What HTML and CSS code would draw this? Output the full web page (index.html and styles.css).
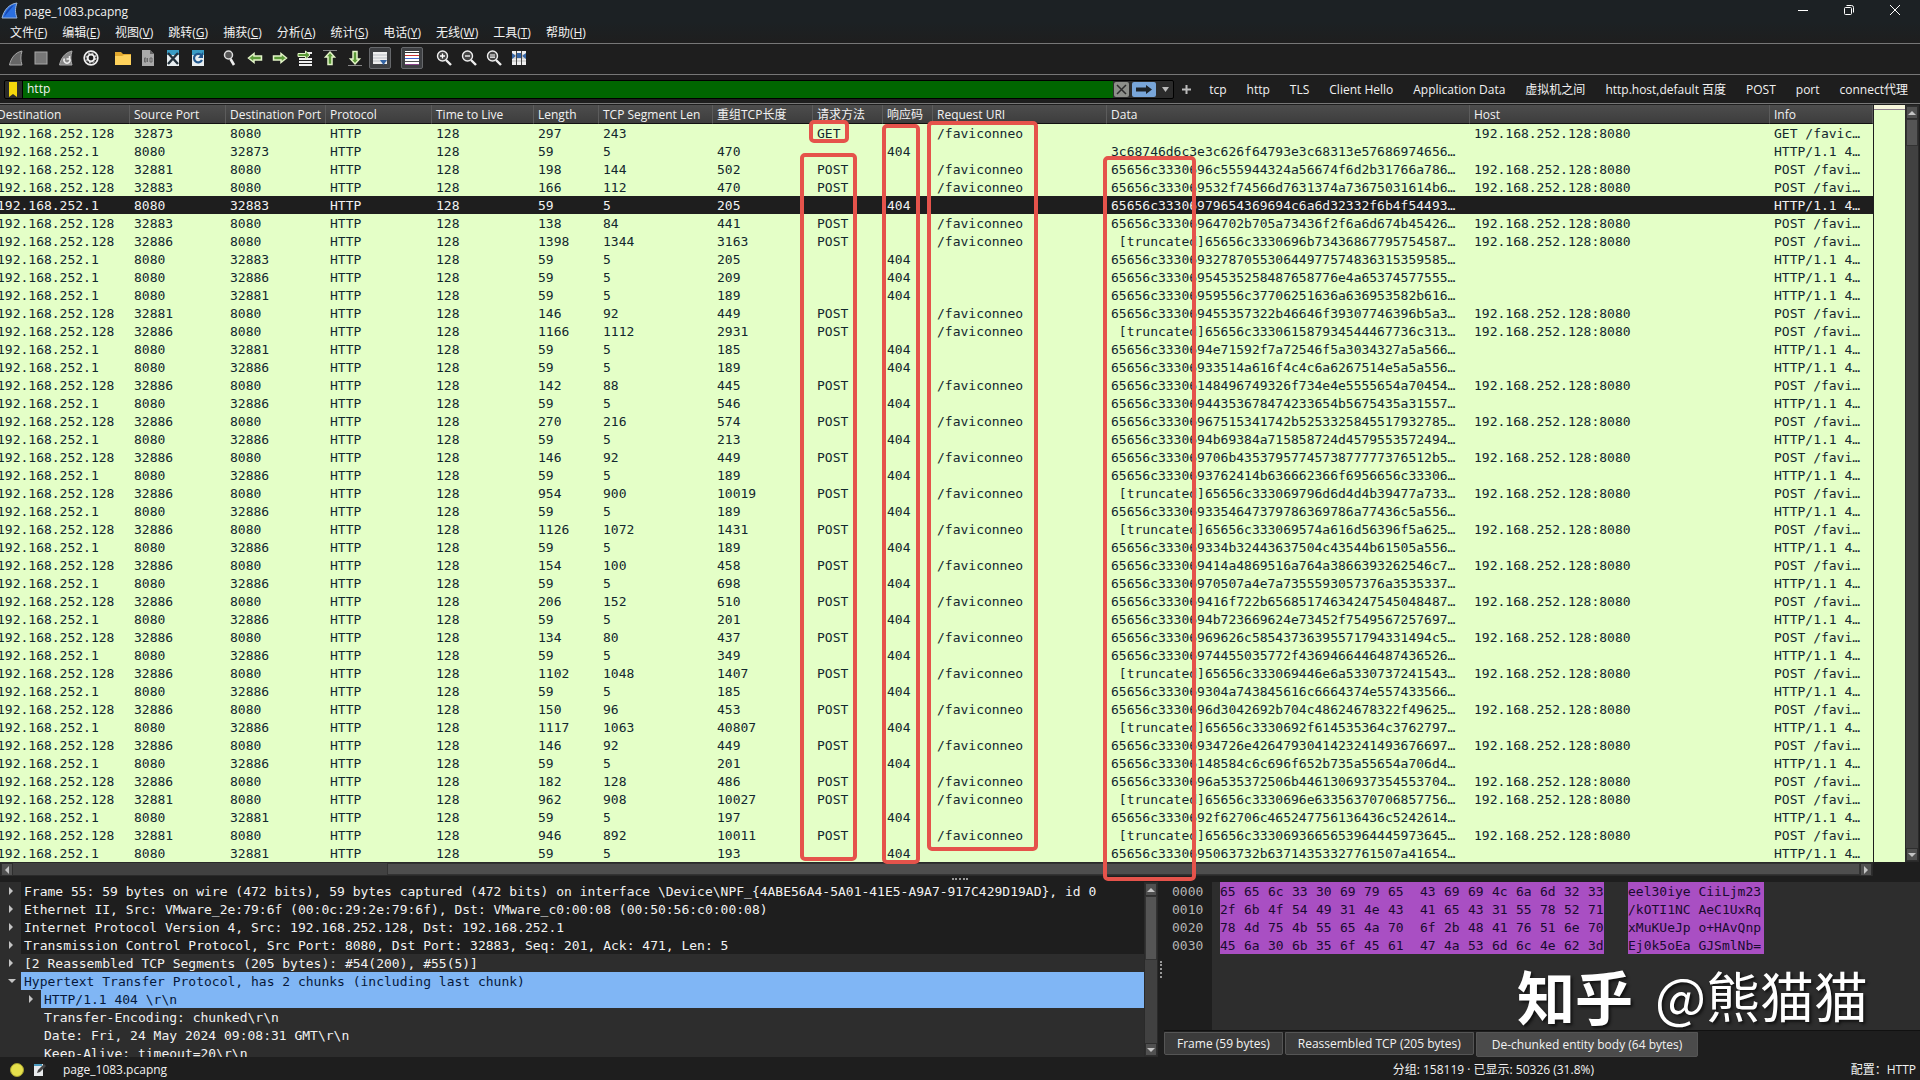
FILE: index.html
```html
<!DOCTYPE html>
<html lang="zh-CN">
<head>
<meta charset="utf-8">
<title>page_1083.pcapng</title>
<link rel="stylesheet" href="styles.css">
</head>
<body>
<header class="titlebar">
  <svg class="app-icon" viewBox="0 0 18 18" aria-hidden="true"><path d="M1 16C3 8 8 2 16 1c-2 5-2 10 0 15z" fill="#2a6fe0" stroke="#9cb6d8" stroke-width="1"/><path d="M3 15c2-6 5-10 10-12z" fill="#1747b0"/></svg>
  <h1 class="title">page_1083.pcapng</h1>
  <button class="win-btn" aria-label="最小化"><svg width="12" height="12" viewBox="0 0 12 12"><path d="M1 6.500h10" stroke="#fff"/></svg></button>
  <button class="win-btn" aria-label="还原"><svg width="12" height="12" viewBox="0 0 12 12" fill="none" stroke="#fff"><rect x="1.500" y="3.500" width="7" height="7" rx="1"/><path d="M3.500 1.500h5q2 0 2 2v5"/></svg></button>
  <button class="win-btn" aria-label="关闭"><svg width="12" height="12" viewBox="0 0 12 12"><path d="M1 1l10 10M11 1L1 11" stroke="#fff"/></svg></button>
</header>
<nav class="menubar">
  <button>文件(<u>F</u>)</button><button>编辑(<u>E</u>)</button><button>视图(<u>V</u>)</button><button>跳转(<u>G</u>)</button><button>捕获(<u>C</u>)</button><button>分析(<u>A</u>)</button><button>统计(<u>S</u>)</button><button>电话(<u>Y</u>)</button><button>无线(<u>W</u>)</button><button>工具(<u>T</u>)</button><button>帮助(<u>H</u>)</button>
</nav>
<div class="toolbar">
  <div class="tool-group">
    <button class="tool" aria-label="开始捕获"><svg viewBox="0 0 16 16"><path d="M1.500 15C3 8 7 2.500 14 1c-1.500 5-1.500 9 0 14z" fill="#666" stroke="#a8a8a8"/></svg></button>
    <button class="tool" aria-label="停止捕获"><svg viewBox="0 0 16 16"><rect x="2" y="2" width="12" height="12" fill="#777" stroke="#a8a8a8"/></svg></button>
    <button class="tool" aria-label="重新开始捕获"><svg viewBox="0 0 16 16"><path d="M1.500 15C3 8 7 2.500 14 1c-1.500 5-1.500 9 0 14z" fill="#888" stroke="#a8a8a8"/><path d="M6.500 8.500a3 3 0 1 0 5 0M11.500 6v3h-3" fill="none" stroke="#eee" stroke-width="1.500"/></svg></button>
    <button class="tool" aria-label="捕获选项"><svg viewBox="0 0 16 16" fill="none" stroke="#eee"><circle cx="8" cy="8" r="6.800" stroke-width="1.700"/><circle cx="8" cy="8" r="3.400" stroke-width="2"/><circle cx="8" cy="8" r="4.900" stroke-width="1" stroke-dasharray="1.900 1.950"/></svg></button>
  </div>
  <div class="tool-group">
    <button class="tool" aria-label="打开"><svg viewBox="0 0 16 16"><path d="M0 2h6l2 2h8v11H0z" fill="#e2a92f"/><path d="M0 6h7l2-1h7v10H0z" fill="#ffd25c"/></svg></button>
    <button class="tool" aria-label="保存"><svg viewBox="0 0 16 16"><path d="M2 0h8l4 4v12H2z" fill="#aaa"/><path d="M10 0v4h4z" fill="#666"/><path d="M4.500 8h1.500v4H4.500zM7.500 8v4M10 8h2v4h-2z" fill="none" stroke="#666"/></svg></button>
    <button class="tool" aria-label="关闭文件"><svg viewBox="0 0 16 16"><path d="M2 0h12v16H2z" fill="#e8eef0"/><path d="M2 0h12v5H2z" fill="#3a9cc4"/><path d="M3 3l10 11M13 3L3 14" stroke="#24313b" stroke-width="2.400"/></svg></button>
    <button class="tool" aria-label="重新加载"><svg viewBox="0 0 16 16"><path d="M2 0h12v16H2z" fill="#e8eef0"/><path d="M2 0h12v5H2z" fill="#3a9cc4"/><path d="M11.500 5.500A4.200 4.200 0 1 0 12 10" fill="none" stroke="#21578c" stroke-width="2.200"/><path d="M13 2v6H8z" fill="#21578c"/></svg></button>
  </div>
  <div class="tool-group">
    <button class="tool" aria-label="查找"><svg viewBox="0 0 16 16"><circle cx="6.500" cy="5" r="4" fill="#555" stroke="#ddd" stroke-width="1.500"/><path d="M8.500 9l3.500 6" stroke="#eee" stroke-width="2.600"/></svg></button>
    <button class="tool" aria-label="上一分组"><svg viewBox="0 0 16 16"><path d="M1.500 8L7 3.500V6h7.500v4H7v2.500z" fill="#5d9b3a" stroke="#e4f5c8" stroke-width="1.500"/></svg></button>
    <button class="tool" aria-label="下一分组"><svg viewBox="0 0 16 16"><path d="M14.500 8L9 3.500V6H1.500v4H9v2.500z" fill="#5d9b3a" stroke="#e4f5c8" stroke-width="1.500"/></svg></button>
    <button class="tool" aria-label="转到分组"><svg viewBox="0 0 16 16"><path d="M9 3h6M2 9h13M2 12h13M2 15h13" stroke="#eee" stroke-width="1.800"/><path d="M13 5L8.500 1v2.500H1v3h7.500V9z" fill="#5d9b3a" stroke="#e4f5c8"/></svg></button>
    <button class="tool" aria-label="首个分组"><svg viewBox="0 0 16 16"><path d="M1 .5h14" stroke="#888"/><path d="M8 2l4.500 5H10v7.500H6V7H3.500z" fill="#5d9b3a" stroke="#e4f5c8" stroke-width="1.500"/></svg></button>
    <button class="tool" aria-label="最新分组"><svg viewBox="0 0 16 16"><path d="M1 15.500h14" stroke="#888"/><path d="M8 14l4.500-5H10V1.500H6V9H3.500z" fill="#5d9b3a" stroke="#e4f5c8" stroke-width="1.500"/></svg></button>
    <button class="tool pressed" aria-label="自动滚动"><svg viewBox="0 0 16 16"><path d="M1 2h14v12H1z" fill="#eee"/><path d="M1 5h14M1 8h14M1 11h14" stroke="#b9bec4"/><path d="M8 10h7l-3.500 5z" fill="#3565a5"/></svg></button>
  </div>
  <div class="tool-group">
    <button class="tool pressed" aria-label="着色"><svg viewBox="0 0 16 16"><path d="M1 1h14v14H1z" fill="#fff"/><path d="M1 2.500h14" stroke="#333"/><path d="M1 5.500h14" stroke="#c33"/><path d="M1 8.500h14" stroke="#46c"/><path d="M1 11.500h14" stroke="#555"/><path d="M1 14.500h14" stroke="#848"/></svg></button>
  </div>
  <div class="tool-group">
    <button class="tool" aria-label="放大"><svg viewBox="0 0 16 16"><circle cx="6.500" cy="6" r="5" fill="#444" stroke="#eee" stroke-width="1.400"/><path d="M10 10l5 5" stroke="#eee" stroke-width="2.400"/><path d="M4 6h5M6.500 3.500v5" stroke="#fff" stroke-width="1.300"/></svg></button>
    <button class="tool" aria-label="缩小"><svg viewBox="0 0 16 16"><circle cx="6.500" cy="6" r="5" fill="#444" stroke="#eee" stroke-width="1.400"/><path d="M10 10l5 5" stroke="#eee" stroke-width="2.400"/><path d="M4 6h5" stroke="#fff" stroke-width="1.300"/></svg></button>
    <button class="tool" aria-label="正常大小"><svg viewBox="0 0 16 16"><circle cx="6.500" cy="6" r="5" fill="#444" stroke="#eee" stroke-width="1.400"/><path d="M10 10l5 5" stroke="#eee" stroke-width="2.400"/><path d="M4 5h5M4 7.200h5" stroke="#fff" stroke-width="1.200"/></svg></button>
    <button class="tool" aria-label="调整列宽"><svg viewBox="0 0 16 16"><path d="M1 1h14v14H1z" fill="#eee"/><path d="M1 5h14M1 8h14M1 11h14" stroke="#bbb"/><path d="M5.500 1v14M10.500 1v14" stroke="#444"/><path d="M1 3l4 3-4 3zM15 3l-4 3 4 3zM6 3h4v5H6z" fill="#3565a5"/></svg></button>
  </div>
</div>
<div class="filterbar">
  <div class="filter-box">
    <button class="bookmark" aria-label="书签"><svg width="10" height="15" viewBox="0 0 10 15"><path d="M1 0h8v15l-4-3-4 3z" fill="#f2d60c"/></svg></button>
    <input class="filter-input" type="text" value="http" aria-label="显示过滤器">
    <button class="clear" aria-label="清除"><svg width="15" height="15" viewBox="0 0 15 15"><rect width="15" height="15" rx="2" fill="#8d8f8a"/><path d="M3 3l9 9M12 3l-9 9" stroke="#2c2c2c" stroke-width="1.500"/></svg></button>
    <button class="apply" aria-label="应用"><svg width="24" height="15" viewBox="0 0 24 15"><rect width="24" height="15" rx="2" fill="#78a5d8"/><path d="M4 5.500h10V3l6 4.500-6 4.500V9.500H4z" fill="#1c2227"/></svg></button>
    <button class="history" aria-label="历史"><svg width="7" height="5" viewBox="0 0 7 5"><path d="M0 0h7L3.500 5z" fill="#bbb"/></svg></button>
  </div>
  <button class="add" aria-label="添加按钮"><svg width="9" height="9" viewBox="0 0 9 9"><path d="M4.500 0v9M0 4.500h9" stroke="#bbb" stroke-width="2"/></svg></button>
  <div class="shortcuts">
    <button>tcp</button><button>http</button><button>TLS</button><button>Client Hello</button><button>Application Data</button><button>虚拟机之间</button><button>http.host,default 百度</button><button>POST</button><button>port</button><button>connect代理</button>
  </div>
</div>
<main class="panes">
  <section class="packets">
    <div class="list-row">
      <div class="list-view">
        <table class="packet-table">
          <colgroup><col class="c-dst"><col class="c-sport"><col class="c-dport"><col class="c-proto"><col class="c-ttl"><col class="c-len"><col class="c-seg"><col class="c-reas"><col class="c-method"><col class="c-code"><col class="c-uri"><col class="c-data"><col class="c-host"><col></colgroup>
          <thead><tr><th>Destination</th><th>Source Port</th><th>Destination Port</th><th>Protocol</th><th>Time to Live</th><th>Length</th><th>TCP Segment Len</th><th>重组TCP长度</th><th>请求方法</th><th>响应码</th><th>Request URI</th><th>Data</th><th>Host</th><th>Info</th></tr></thead>
          <tbody id="packet-rows"></tbody>
        </table>
      </div>
      <div class="minimap"></div>
      <div class="vscroll"><span class="arrow up"></span><span class="thumb short"></span><span class="arrow down"></span></div>
    </div>
    <div class="hscroll"><span class="arrow left"></span><span class="hthumb"></span><span class="arrow right"></span></div>
    <div class="mark mark-get"></div>
    <div class="mark mark-post"></div>
    <div class="mark mark-code"></div>
    <div class="mark mark-uri"></div>
    <div class="mark mark-data"></div>
  </section>
  <div class="splitter"><span class="dots"></span></div>
  <section class="lower">
    <ul class="tree">
      <li class="closed"><span class="field top">Frame 55: 59 bytes on wire (472 bits), 59 bytes captured (472 bits) on interface \Device\NPF_{4ABE56A4-5A01-41E5-A9A7-917C429D19AD}, id 0</span></li>
      <li class="closed"><span class="field top">Ethernet II, Src: VMware_2e:79:6f (00:0c:29:2e:79:6f), Dst: VMware_c0:00:08 (00:50:56:c0:00:08)</span></li>
      <li class="closed"><span class="field top">Internet Protocol Version 4, Src: 192.168.252.128, Dst: 192.168.252.1</span></li>
      <li class="closed"><span class="field top">Transmission Control Protocol, Src Port: 8080, Dst Port: 32883, Seq: 201, Ack: 471, Len: 5</span></li>
      <li class="closed"><span class="field">[2 Reassembled TCP Segments (205 bytes): #54(200), #55(5)]</span></li>
      <li class="open"><span class="field selected">Hypertext Transfer Protocol, has 2 chunks (including last chunk)</span></li>
      <li class="closed child"><span class="field selected">HTTP/1.1 404 \r\n</span></li>
      <li class="child"><span class="field">Transfer-Encoding: chunked\r\n</span></li>
      <li class="child"><span class="field">Date: Fri, 24 May 2024 09:08:31 GMT\r\n</span></li>
      <li class="child"><span class="field">Keep-Alive: timeout=20\r\n</span></li>
    </ul>
    <div class="vscroll"><span class="arrow up"></span><span class="thumb tall"></span><span class="arrow down"></span></div>
    <div class="vsplitter"><span class="vdots"></span></div>
    <div class="bytes">
      <div class="hex-view">
        <table class="hex"><tbody id="hex-rows"></tbody></table>
        <p class="watermark"><b>知乎</b><span>@熊猫猫</span></p>
      </div>
      <div class="tabs"><button>Frame (59 bytes)</button><button>Reassembled TCP (205 bytes)</button><button class="active">De-chunked entity body (64 bytes)</button></div>
    </div>
  </section>
</main>
<footer class="statusbar">
  <svg width="14" height="14" viewBox="0 0 14 14" aria-hidden="true"><circle cx="7" cy="7" r="6.500" fill="#e5e04c" stroke="#a5a02e"/></svg>
  <svg width="14" height="14" viewBox="0 0 14 14" aria-hidden="true"><path d="M1 1h9v12H1z" fill="#e8eaec"/><path d="M1 1h8v2H1z" fill="#4a9ac0"/><path d="M4 10l1-3 6-6 2 2-6 6z" fill="#444"/></svg>
  <span class="file">page_1083.pcapng</span>
  <span class="counts">分组: 158119 · 已显示: 50326 (31.8%)</span>
  <span class="profile">配置：HTTP</span>
</footer>
<script src="packets.js"></script>
</body>
</html>
```
FILE: styles.css
```css
* { box-sizing: border-box; }
body {
  margin: 0;
  height: 100vh;
  display: flex;
  flex-direction: column;
  overflow: hidden;
  background: #1e1e1e;
  color: #f2f2f2;
  font: 12px/18px "Open Sans", "Noto Sans CJK SC", sans-serif;
}
button { font: inherit; color: inherit; background: none; border: 0; padding: 0; white-space: nowrap; }
svg { display: block; }

.titlebar { display: flex; height: 22px; padding-right: 2px; background: #1c2124; }
.app-icon { width: 18px; height: 18px; margin: 2px 5px 0 1px; }
.title { flex: 1; margin: 3px 0 0; font-size: 12px; font-weight: 400; line-height: 18px; }
.win-btn { display: flex; width: 46px; height: 20px; align-items: center; justify-content: center; }

.menubar { display: flex; gap: 15px; padding: 1px 10px 0; height: 22px; background: linear-gradient(#1c2124, #1e1e1e); border-bottom: 1px solid #777; }

.toolbar { display: flex; gap: 10px; padding: 3px 5px 0; height: 31px; border-bottom: 1px solid #777; }
.tool-group { display: flex; gap: 3px; }
.tool { width: 22px; height: 22px; padding: 3px; }
.tool svg { width: 16px; height: 16px; }
.tool.pressed { background: #3e4043; border: 1px solid #66686b; border-radius: 2px; padding: 2px; }

.filterbar { display: flex; align-items: center; height: 29px; padding: 0 12px 0 4px; border-bottom: 1px solid #777; }
.filter-box { flex: 1; display: flex; align-items: center; height: 19px; border: 1px solid #000; border-radius: 2px; background: #2b2b2b; }
.bookmark { width: 17px; padding-left: 3px; }
.filter-input { flex: 1; min-width: 0; height: 17px; border: 0; border-left: 1px solid #000; padding: 0 4px; background: #006600; color: #f2f2f2; font: inherit; outline: 0; }
.clear { margin: 0 3px 0 1px; }
.history { width: 17px; padding-left: 6px; }
.add { width: 26px; padding-left: 8px; }
.shortcuts { display: flex; gap: 20px; padding: 2px 0 0 9px; }

.panes { flex: 1; min-height: 0; display: flex; flex-direction: column; padding-top: 1px; }
.packets { position: relative; }
.list-row { display: flex; }
.list-view { flex: 1; min-width: 0; overflow: hidden; background: #e4ffc7; }
.packet-table { width: calc(100% + 7px); margin-left: -7px; table-layout: fixed; border-collapse: separate; border-spacing: 0; font: 13px/16px "DejaVu Sans Mono", "Liberation Mono", monospace; color: #12272e; }
.packet-table th { height: 19px; padding: 2px 4px 0; overflow: hidden; border-right: 1px solid #5c5c5c; border-bottom: 1px solid #111; background: linear-gradient(#4d4d4d, #3d3d3d); color: #f2f2f2; font: 12px/16px "Open Sans", "Noto Sans CJK SC", sans-serif; text-align: left; white-space: nowrap; }
.packet-table td { height: 18px; padding: 2px 4px 0; overflow: hidden; white-space: pre; }
.packet-table .current { background: #1e1e1e; color: #f2f2f2; }
.c-dst { width: 137px; }
.c-sport { width: 96px; }
.c-dport { width: 100px; }
.c-proto { width: 106px; }
.c-ttl { width: 102px; }
.c-len { width: 65px; }
.c-seg { width: 114px; }
.c-reas { width: 100px; }
.c-method { width: 70px; }
.c-code { width: 50px; }
.c-uri { width: 174px; }
.c-data { width: 363px; }
.c-host { width: 300px; }

.minimap { width: 31px; margin-left: 1px; background: linear-gradient(#f6f6dc 4px, #8b7d8b 4px, #8b7d8b 5px, #e4ffc7 5px); }
.vscroll { display: flex; flex-direction: column; width: 14px; background: #414141; border: 1px solid #2a2a2a; }
.packets .vscroll { margin-right: 1px; }
.arrow { display: flex; align-items: center; justify-content: center; flex: none; width: 12px; height: 13px; background: #505050; border: 1px solid #2e2e2e; }
.arrow::before { content: ""; border: 4px solid transparent; }
.up::before { border-top: 0; border-bottom-color: #c4c4c4; }
.down::before { border-bottom: 0; border-top-color: #c4c4c4; }
.left::before { border-left: 0; border-right-color: #c4c4c4; }
.right::before { border-right: 0; border-left-color: #c4c4c4; }
.down { margin-top: auto; }
.thumb { background: #555; border: 1px solid #333; }
.short { height: 27px; }
.tall { height: 64px; }
.hscroll { display: flex; height: 14px; margin-right: 47px; background: #414141; border: 1px solid #2a2a2a; }
.hthumb { flex: 1; margin-left: 20%; background: #4e4e4e; border: 1px solid #333; }

.mark { position: absolute; border: 4px solid #e5534b; border-radius: 5px; }
.mark-get { left: 809px; top: 15px; width: 40px; height: 23px; }
.mark-post { left: 800px; top: 48px; width: 57px; height: 708px; }
.mark-code { left: 882px; top: 19px; width: 38px; height: 740px; }
.mark-uri { left: 927px; top: 16px; width: 111px; height: 730px; }
.mark-data { left: 1103px; top: 51px; width: 93px; height: 725px; z-index: 1; }

.splitter { display: flex; align-items: center; justify-content: center; height: 6px; flex: none; }
.dots { width: 16px; border-top: 2px dotted #999; }
.lower { flex: 1; min-height: 0; display: flex; }
.tree { flex: 1; min-width: 0; margin: 0; padding: 0; overflow: hidden; list-style: none; background: #2d2d2d; font: 13px/16px "DejaVu Sans Mono", "Liberation Mono", monospace; }
.tree li { display: flex; height: 18px; white-space: nowrap; }
.tree li::before { content: ""; flex: none; width: 0; height: 0; margin: 5px 8px 0 9px; border: 4px solid transparent; border-right-width: 0; }
.tree .closed::before { border-left-color: #c4c4c4; }
.tree .open::before { margin: 7px 5px 0 8px; border: 4px solid transparent; border-bottom-width: 0; border-top-color: #c4c4c4; }
.tree .child { padding-left: 20px; }
.field { flex: 1; padding: 2px 0 0 3px; overflow: hidden; }
.top { background: #1e1e1e; }
.selected { background: #80b6f5; color: #06183a; }
.vsplitter { display: flex; align-items: center; justify-content: center; width: 6px; }
.vdots { height: 17px; border-left: 2px dotted #999; }
.bytes { flex: none; width: 756px; max-width: 40%; display: flex; flex-direction: column; }
.hex-view { position: relative; flex: 1; background: linear-gradient(90deg, #1e1e1e 48px, #2d2d2d 48px); }
.hex { border-collapse: collapse; font: 13px/16px "DejaVu Sans Mono", "Liberation Mono", monospace; white-space: pre; color: #190b30; }
.hex th { width: 56px; padding: 2px 0 0 8px; font-weight: 400; text-align: left; color: #b4b4b4; }
.hex td { width: 24px; height: 18px; padding: 2px 0 0; background: #a94fc3; }
.hex .group-end { width: 32px; }
.hex .line-end { width: 16px; }
.hex .space { width: 24px; background: none; }
.hex .ascii { width: 136px; }
.watermark { position: absolute; right: 52px; bottom: 0; margin: 0; display: flex; gap: 22px; font: 54px/70px "Noto Sans CJK SC", sans-serif; color: #fff; text-shadow: 2px 2px 3px #111; white-space: nowrap; }
.watermark b { font-size: 58px; }
.tabs { display: flex; align-items: flex-start; gap: 2px; height: 27px; padding-top: 1px; border-top: 1px solid #111; }
.tabs button { height: 23px; padding: 0 12px; background: #3b3b3b; border: 1px solid #555; border-radius: 0 0 2px 2px; }
.tabs .active { height: 25px; padding: 0 15px; background: #4b4b4b; }

.statusbar { display: flex; align-items: center; gap: 9px; height: 23px; padding: 2px 4px 0 10px; }
.file { flex: 1; padding-left: 7px; }
.counts { width: 449px; }
.profile { margin-left: auto; }
```
FILE: packets.js
```js
// G = GET request, P = POST request, R = response
// kind, port, length, segment length, reassembled length, data
const K = "65656c3330";
const T = " [truncated]" + K;
const packets = [
  ["G", 32873, 297, 243, "", ""],
  ["R", 32873, 59, 5, 470, "3c68746d6c3e3c626f64793e3c68313e57686974656"],
  ["P", 32881, 198, 144, 502, K + "696c555944324a56674f6d2b31766a786"],
  ["P", 32883, 166, 112, 470, K + "69532f74566d7631374a73675031614b6"],
  ["R", 32883, 59, 5, 205, K + "6979654369694c6a6d32332f6b4f54493"],
  ["P", 32883, 138, 84, 441, K + "6964702b705a73436f2f6a6d674b45426"],
  ["P", 32886, 1398, 1344, 3163, T + "696b73436867795754587"],
  ["R", 32883, 59, 5, 205, K + "693278705530644977574836315359585"],
  ["R", 32886, 59, 5, 209, K + "6954535258487658776e4a65374577555"],
  ["R", 32881, 59, 5, 189, K + "6959556c37706251636a636953582b616"],
  ["P", 32881, 146, 92, 449, K + "69455357322b46646f39307746396b5a3"],
  ["P", 32886, 1166, 1112, 2931, T + "61587934544467736c313"],
  ["R", 32881, 59, 5, 185, K + "694e71592f7a72546f5a3034327a5a566"],
  ["R", 32886, 59, 5, 189, K + "6933514a616f4c4c6a6267514e5a5a556"],
  ["P", 32886, 142, 88, 445, K + "6148496749326f734e4e5555654a70454"],
  ["R", 32886, 59, 5, 546, K + "6944353678474233654b5675435a31557"],
  ["P", 32886, 270, 216, 574, K + "6967515341742b5253325845517932785"],
  ["R", 32886, 59, 5, 213, K + "694b69384a715858724d4579553572494"],
  ["P", 32886, 146, 92, 449, K + "69706b4353795774573877777376512b5"],
  ["R", 32886, 59, 5, 189, K + "693762414b636662366f6956656c33306"],
  ["P", 32886, 954, 900, 10019, T + "69796d6d4d4b39477a733"],
  ["R", 32886, 59, 5, 189, K + "693354647379786369786a77436c5a556"],
  ["P", 32886, 1126, 1072, 1431, T + "69574a616d56396f5a625"],
  ["R", 32886, 59, 5, 189, K + "69334b32443637504c43544b61505a556"],
  ["P", 32886, 154, 100, 458, K + "69414a4869516a764a3866393262546c7"],
  ["R", 32886, 59, 5, 698, K + "6970507a4e7a7355593057376a3535337"],
  ["P", 32886, 206, 152, 510, K + "69416f722b65685174634247545048487"],
  ["R", 32886, 59, 5, 201, K + "694b723669624e73452f7549567257697"],
  ["P", 32886, 134, 80, 437, K + "6969626c58543736395571794331494c5"],
  ["R", 32886, 59, 5, 349, K + "6974455035772f4369466446487436526"],
  ["P", 32886, 1102, 1048, 1407, T + "69446e6a5330737241543"],
  ["R", 32886, 59, 5, 185, K + "69304a743845616c6664374e557433566"],
  ["P", 32886, 150, 96, 453, K + "696d3042692b704c48624678322f49625"],
  ["R", 32886, 1117, 1063, 40807, T + "692f614535364c3762797"],
  ["P", 32886, 146, 92, 449, K + "6934726e4264793041423241493676697"],
  ["R", 32886, 59, 5, 201, K + "6148584c6c696f652b735a55654a706d4"],
  ["P", 32886, 182, 128, 486, K + "696a535372506b4461306937354553704"],
  ["P", 32881, 962, 908, 10027, T + "696e63356370706857756"],
  ["R", 32881, 59, 5, 197, K + "692f62706c465247756136436c5242614"],
  ["P", 32881, 946, 892, 10011, T + "693665653964445973645"],
  ["R", 32881, 59, 5, 193, K + "695063732b63714353327761507a41654"]
];

function addCells(row, values) {
  values.forEach(v => { row.insertCell().textContent = v; });
}

const body = document.getElementById("packet-rows");
packets.forEach(([kind, port, len, seg, reas, data], i) => {
  const row = body.insertRow();
  const reply = kind === "R";
  if (i === 4) row.className = "current";
  addCells(row, [
    reply ? "192.168.252.1" : "192.168.252.128",
    reply ? 8080 : port,
    reply ? port : 8080,
    "HTTP", 128, len, seg, reas,
    reply ? "" : kind === "G" ? "GET" : "POST",
    reply ? 404 : "",
    reply ? "" : "/faviconneo",
    data ? data + "…" : "",
    reply ? "" : "192.168.252.128:8080",
    reply ? "HTTP/1.1 4…" : kind === "G" ? "GET /favic…" : "POST /favi…"
  ]);
});

const dump = ["eel30iyeCiiLjm23", "/kOTI1NCAeC1UxRq", "xMuKUeJpo+HAvQnp", "Ej0k5oEaGJSmlNb="];
const hex = document.getElementById("hex-rows");
dump.forEach((line, i) => {
  const row = hex.insertRow();
  const offset = document.createElement("th");
  offset.scope = "row";
  offset.textContent = "00" + i + "0";
  row.append(offset);
  addCells(row, [...line].map(c => c.charCodeAt(0).toString(16)));
  row.cells[8].className = "group-end";
  row.cells[16].className = "line-end";
  row.insertCell().className = "space";
  const ascii = row.insertCell();
  ascii.className = "ascii";
  ascii.textContent = line.slice(0, 8) + " " + line.slice(8);
});
```
